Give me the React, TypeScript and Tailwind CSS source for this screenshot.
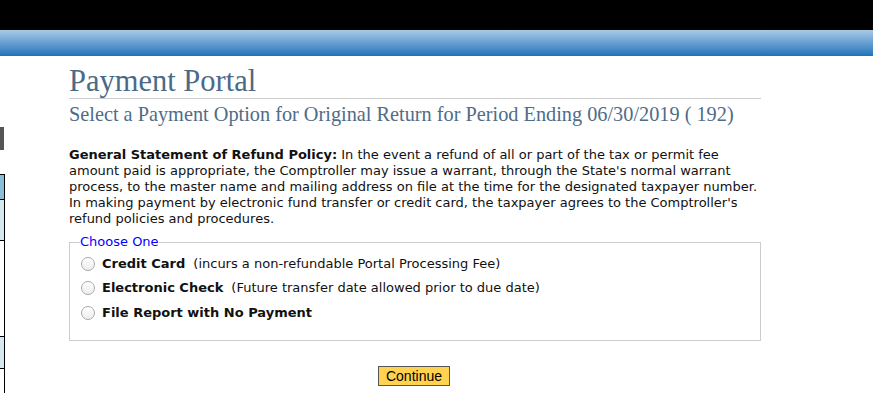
import React from "react";

const options = [
  { label: "Credit Card", note: "(incurs a non-refundable Portal Processing Fee)" },
  { label: "Electronic Check", note: "(Future transfer date allowed prior to due date)" },
  { label: "File Report with No Payment", note: "" },
];

function Radio() {
  return (
    <span className="inline-block w-[14px] h-[14px] rounded-full border border-[#a9a9a9] bg-gradient-to-b from-white to-[#eeeeee] shrink-0" />
  );
}

export default function App() {
  return (
    <div className="w-[873px] h-[393px] overflow-hidden bg-white">
      {/* top bars */}
      <div className="h-[30px] bg-black" />
      <div className="h-[26px] bg-gradient-to-b from-[#a6cbe6] to-[#1a73ba]" />

      <div className="flex">
        {/* sidebar fragment */}
        <div className="w-[5px] shrink-0">
          <div className="mt-[71px] h-[23px] w-[4px] bg-[#555]" />
          <div className="mt-[24px] border-r border-black">
            <div className="h-[25px] border-t border-black bg-[#8cbdd7]" />
            <div className="h-[41px] border-t border-black bg-[#d6e9f0]" />
            <div className="h-[96px] border-t border-black bg-white" />
            <div className="h-[32px] border-t border-black bg-[#d6e9f0]" />
            <div className="h-[30px] border-t border-black bg-white" />
          </div>
        </div>

        {/* main content */}
        <div className="ml-[64px] w-[692px]">
          <h1 className="mt-[8px] text-[30.5px] leading-[34px] text-[#4b6a88] font-['Georgia','Liberation_Serif',serif] border-b border-[#cccccc]">
            Payment Portal
          </h1>
          <h2 className="mt-[2px] text-[20.3px] leading-[26px] text-[#4f6c88] font-['Georgia','Liberation_Serif',serif]">
            Select a Payment Option for Original Return for Period Ending 06/30/2019 ( 192)
          </h2>

          <p className="mt-[20px] text-[13px] leading-[16px] text-[#111] font-['Verdana','DejaVu_Sans',sans-serif]">
            <b>General Statement of Refund Policy:</b> In the event a refund of all or part of the tax or permit fee
            amount paid is appropriate, the Comptroller may issue a warrant, through the State's normal warrant
            process, to the master name and mailing address on file at the time for the designated taxpayer number.
            In making payment by electronic fund transfer or credit card, the taxpayer agrees to the Comptroller's
            refund policies and procedures.
          </p>

          <fieldset className="mt-[7px] border border-[#cccccc] px-[11px] pt-[5px] pb-[19px] font-['Verdana','DejaVu_Sans',sans-serif] text-[13px] text-[#111]">
            <legend className="text-[#0000ff] leading-[16px] -ml-[1px]">Choose One</legend>
            <div className="flex flex-col gap-[7.5px]">
              {options.map((o) => (
                <label key={o.label} className="flex items-center h-[17px]">
                  <Radio />
                  <span className="ml-[7px] font-bold">{o.label}</span>
                  {o.note && <span className="ml-[8px]">{o.note}</span>}
                </label>
              ))}
            </div>
          </fieldset>

          <div className="mt-[25px] flex justify-center">
            <button className="ml-[-2px] h-[20px] px-[7px] bg-[#ffd24f] border border-[#555] text-[14px] leading-[18px] text-black font-['Helvetica','Liberation_Sans',sans-serif]">
              Continue
            </button>
          </div>
        </div>
      </div>
    </div>
  );
}
